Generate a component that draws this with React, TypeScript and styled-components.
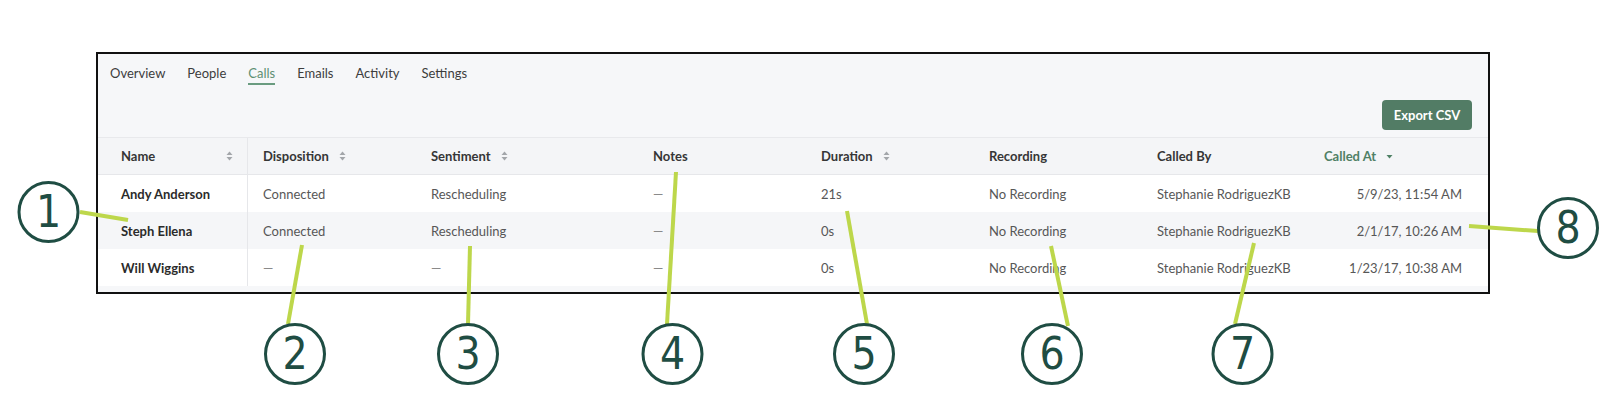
import React from "react";
import styled, { createGlobalStyle } from "styled-components";

const GlobalStyle = createGlobalStyle`
  html, body {
    margin: 0;
    padding: 0;
    background: #fff;
  }
  body {
    font-family: Lato, "Open Sans", "Liberation Sans", Arial, sans-serif;
    -webkit-font-smoothing: antialiased;
  }
`;

const columns = "150px 168px 222px 168px 168px 168px 167px 1fr";

const Page = styled.div`
  position: relative;
  width: 1612px;
  height: 402px;
  box-sizing: border-box;
  padding: 52px 0 0 96px;
`;

const Frame = styled.div`
  width: 1394px;
  box-sizing: border-box;
  border: 2px solid #111;
  background: #f6f7f9;
  padding-bottom: 6px;
`;

const Tabs = styled.nav`
  display: flex;
  gap: 22px;
  padding: 11px 0 0 12px;
`;

const Tab = styled.div<{ $active?: boolean }>`
  font-size: 13px;
  line-height: 16px;
  padding-bottom: 2px;
  color: ${(p) => (p.$active ? "#5e8f73" : "#3d3d3d")};
  border-bottom: 2px solid ${(p) => (p.$active ? "#6a9c80" : "transparent")};
`;

const Toolbar = styled.div`
  display: flex;
  justify-content: flex-end;
  padding: 15px 16px 0 0;
  margin-bottom: 7px;
`;

const ExportButton = styled.button`
  width: 90px;
  height: 30px;
  border: none;
  border-radius: 4px;
  background: #527c65;
  color: #fff;
  font-family: inherit;
  font-size: 13px;
  font-weight: 700;
  cursor: pointer;
`;

const Row = styled.div<{ $head?: boolean; $shade?: boolean }>`
  display: grid;
  grid-template-columns: ${columns};
  height: ${(p) => (p.$head ? "36px" : "37px")};
  background: ${(p) => (p.$head ? "#f4f5f7" : p.$shade ? "#f5f6f8" : "#fff")};
  border-top: ${(p) => (p.$head ? "1px solid #e8e9ec" : "none")};
  border-bottom: ${(p) => (p.$head ? "1px solid #e6e7ea" : "none")};
  font-size: 13px;
`;

const Cell = styled.div<{ $first?: boolean; $end?: boolean; $head?: boolean; $bold?: boolean; $accent?: boolean; $muted?: boolean }>`
  display: flex;
  align-items: center;
  gap: 10px;
  padding: ${(p) => (p.$first ? "0 14px 0 23px" : p.$end && !p.$head ? "0 26px 0 15px" : "0 15px")};
  justify-content: ${(p) => (p.$first && p.$head ? "space-between" : p.$end && !p.$head ? "flex-end" : "flex-start")};
  border-right: ${(p) => (p.$first ? "1px solid #e6e7ea" : "none")};
  font-weight: ${(p) => (p.$head ? 700 : p.$bold ? 700 : 400)};
  color: ${(p) =>
    p.$accent ? "#4f8065" : p.$head ? "#363636" : p.$bold ? "#2b2b2b" : p.$muted ? "#8a8a8a" : "#575757"};
  white-space: nowrap;
`;

const Overlay = styled.svg`
  position: absolute;
  top: 0;
  left: 0;
  pointer-events: none;
`;

const SortIcon = () => (
  <svg width="7" height="10" viewBox="0 0 7 10">
    <path d="M3.5 0.5 L6.5 4 L0.5 4 Z" fill="#a3a6aa" />
    <path d="M3.5 9.5 L6.5 6 L0.5 6 Z" fill="#a3a6aa" />
  </svg>
);

const CaretDown = () => (
  <svg width="7" height="6" viewBox="0 0 7 6" style={{ marginTop: 2 }}>
    <path d="M0.5 1 L6.5 1 L3.5 4.5 Z" fill="#4f8065" />
  </svg>
);

type Call = {
  name: string;
  disposition: string;
  sentiment: string;
  duration: string;
  calledAt: string;
};

const calls: Call[] = [
  { name: "Andy Anderson", disposition: "Connected", sentiment: "Rescheduling", duration: "21s", calledAt: "5/9/23, 11:54 AM" },
  { name: "Steph Ellena", disposition: "Connected", sentiment: "Rescheduling", duration: "0s", calledAt: "2/1/17, 10:26 AM" },
  { name: "Will Wiggins", disposition: "", sentiment: "", duration: "0s", calledAt: "1/23/17, 10:38 AM" },
];

const callouts = [
  { n: "1", cx: 48.5, cy: 212, line: [80, 212, 128, 220] },
  { n: "2", cx: 295, cy: 354, line: [302, 245, 288, 324] },
  { n: "3", cx: 468, cy: 354, line: [470, 246, 468, 324] },
  { n: "4", cx: 672.5, cy: 354, line: [676, 172, 667, 324] },
  { n: "5", cx: 864, cy: 354, line: [847, 211, 867, 324] },
  { n: "6", cx: 1052, cy: 354, line: [1051, 246, 1068, 326] },
  { n: "7", cx: 1242.5, cy: 354, line: [1254, 243, 1235, 324] },
  { n: "8", cx: 1568, cy: 228, line: [1469, 226, 1538, 231] },
];

const Dash = () => <>—</>;

export default function App() {
  return (
    <Page>
      <GlobalStyle />
      <Frame>
        <Tabs>
          <Tab>Overview</Tab>
          <Tab>People</Tab>
          <Tab $active>Calls</Tab>
          <Tab>Emails</Tab>
          <Tab>Activity</Tab>
          <Tab>Settings</Tab>
        </Tabs>
        <Toolbar>
          <ExportButton>Export CSV</ExportButton>
        </Toolbar>
        <Row $head>
          <Cell $first $head>
            Name <SortIcon />
          </Cell>
          <Cell $head>
            Disposition <SortIcon />
          </Cell>
          <Cell $head>
            Sentiment <SortIcon />
          </Cell>
          <Cell $head>Notes</Cell>
          <Cell $head>
            Duration <SortIcon />
          </Cell>
          <Cell $head>Recording</Cell>
          <Cell $head>Called By</Cell>
          <Cell $head $end $accent>
            Called At <CaretDown />
          </Cell>
        </Row>
        {calls.map((c, i) => (
          <Row key={c.name} $shade={i % 2 === 1}>
            <Cell $first $bold>
              {c.name}
            </Cell>
            <Cell $muted={!c.disposition}>{c.disposition || <Dash />}</Cell>
            <Cell $muted={!c.sentiment}>{c.sentiment || <Dash />}</Cell>
            <Cell $muted>
              <Dash />
            </Cell>
            <Cell>{c.duration}</Cell>
            <Cell>No Recording</Cell>
            <Cell>Stephanie RodriguezKB</Cell>
            <Cell $end>{c.calledAt}</Cell>
          </Row>
        ))}
      </Frame>
      <Overlay width="1612" height="402" viewBox="0 0 1612 402">
        {callouts.map((c) => (
          <g key={c.n}>
            <line
              x1={c.line[0]}
              y1={c.line[1]}
              x2={c.line[2]}
              y2={c.line[3]}
              stroke="#bdd74b"
              strokeWidth="4"
            />
            <circle cx={c.cx} cy={c.cy} r="29.5" fill="#fff" stroke="#1f4d43" strokeWidth="3" />
            <text
              x={c.cx}
              y={c.cy + 15}
              textAnchor="middle"
              fontSize="44"
              fill="#1f4d43"
              fontFamily='"Liberation Sans Narrow", "DejaVu Sans Condensed", "Liberation Sans", sans-serif'
            >
              {c.n}
            </text>
          </g>
        ))}
      </Overlay>
    </Page>
  );
}
